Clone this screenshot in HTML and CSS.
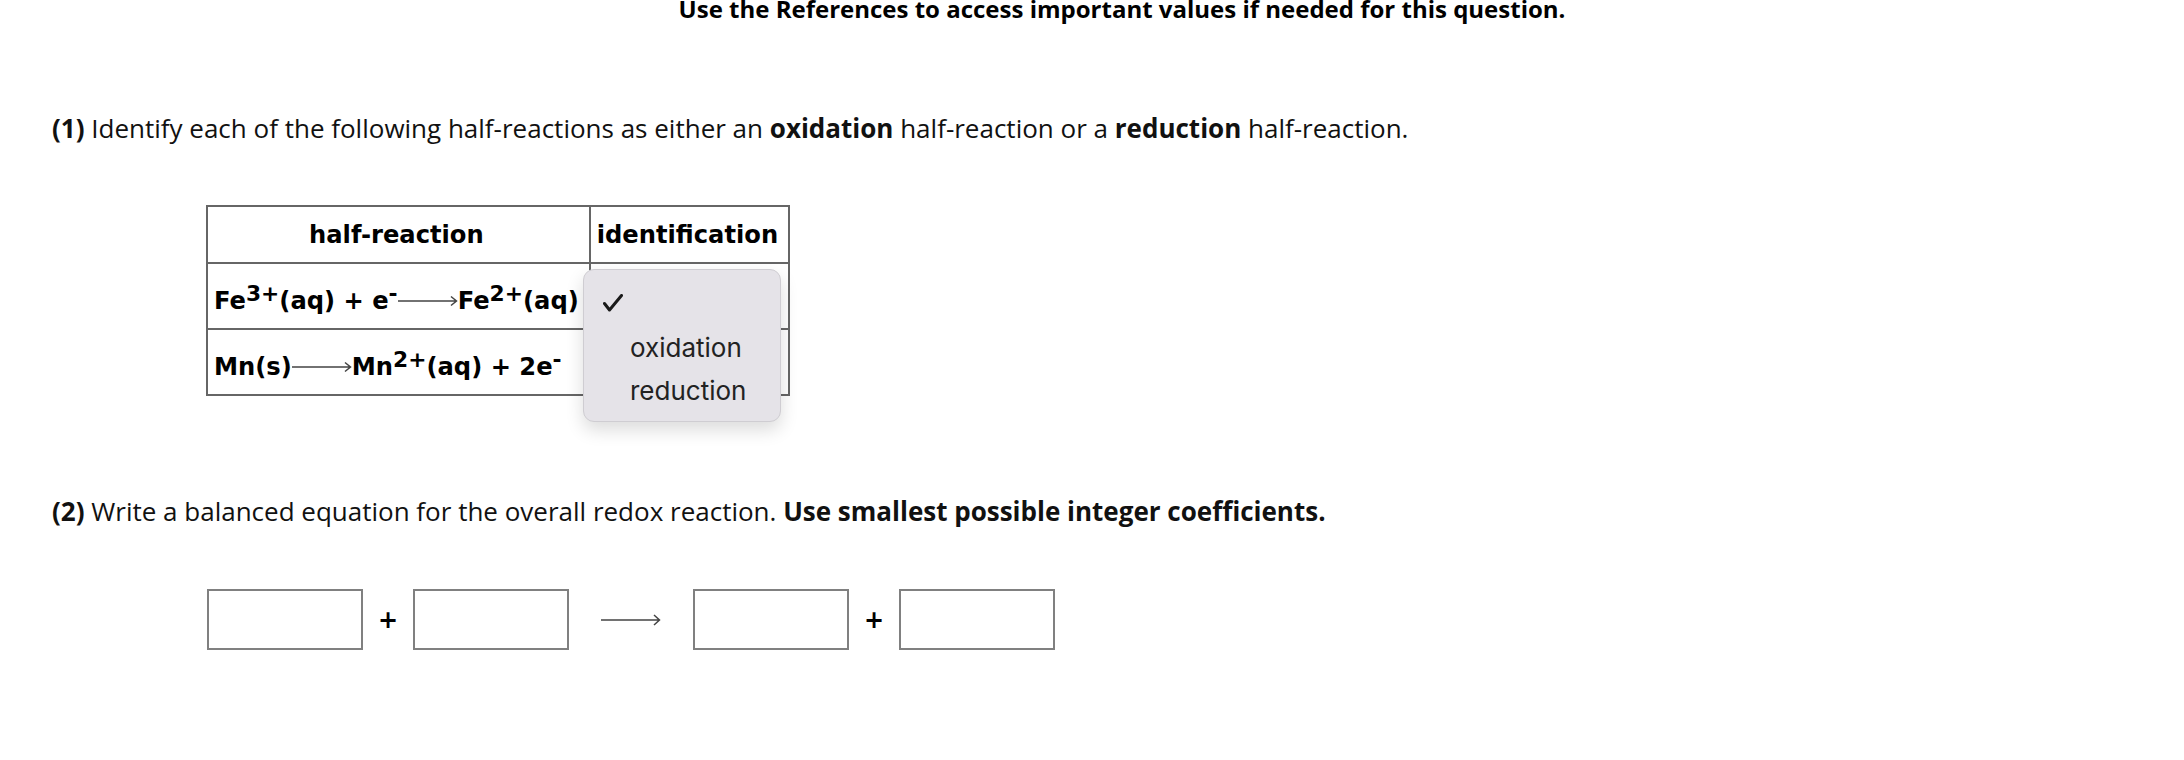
FILE: index.html
```html
<!DOCTYPE html>
<html>
<head lang="en">
    <meta charset="UTF-8">
    <title>Redox half-reactions</title>
<link rel="stylesheet" href="styles.css">
</head>
<body>
  <h1 class="refs">Use the References to access important values if needed for this question.</h1>

  <div class="question">
    <p class="prompt"><b>(1)</b> Identify each of the following half-reactions as either an <b>oxidation</b> half-reaction or a <b>reduction</b> half-reaction.</p>

    <div class="tableWrap">
      <table class="reactions">
        <tr>
          <th class="colReaction">half-reaction</th>
          <th class="colId">identification</th>
        </tr>
        <tr>
          <td>Fe<sup>3+</sup>(aq) + e<sup>-</sup><svg class="arrow" width="60" height="12" viewBox="0 0 60 12"><path d="M0 6H58M53 1.5L58.5 6L53 10.5" /></svg>Fe<sup>2+</sup>(aq)</td>
          <td></td>
        </tr>
        <tr>
          <td>Mn(s)<svg class="arrow" width="60" height="12" viewBox="0 0 60 12"><path d="M0 6H58M53 1.5L58.5 6L53 10.5" /></svg>Mn<sup>2+</sup>(aq) + 2e<sup>-</sup></td>
          <td></td>
        </tr>
      </table>

      <div class="selectMenu">
        <div class="option"><svg class="check" width="20" height="18" viewBox="0 0 20 18"><path d="M1.5 9.5L6.5 16L18.5 1.5" /></svg></div>
        <div class="option">oxidation</div>
        <div class="option">reduction</div>
      </div>
    </div>

    <p class="prompt second"><b>(2)</b> Write a balanced equation for the overall redox reaction. <b>Use smallest possible integer coefficients.</b></p>

    <div class="equation">
      <span class="slot"></span>
      <span class="plus">+</span>
      <span class="slot"></span>
      <svg class="eqArrow" width="60" height="14" viewBox="0 0 60 14"><path d="M0 7H58M53 2L58.5 7L53 12" /></svg>
      <span class="slot"></span>
      <span class="plus">+</span>
      <span class="slot"></span>
    </div>
  </div>
</body>
</html>
```

FILE: styles.css
```css
body, html {
    border: 0;
    padding: 0;
    margin: 0;
    overflow: hidden;
    background: white;
}

body {
  color: #111;
  font-family: "Open Sans", "Noto Sans", sans-serif;
}

.refs{
  margin: -3px 0 0 0;
  padding-left: 60px;
  text-align: center;
  font-size: 24px;
  line-height: 24px;
  font-weight: 700;
  color: #000;
}

.question{
  padding-left: 52px;
}

.prompt{
  margin: 90px 0 0 0;
  font-size: 26px;
  line-height: 34px;
  white-space: nowrap;
}

.prompt b{
  font-weight: 700;
}

.prompt.second{
  margin-top: 98px;
}

.tableWrap{
  position: relative;
  width: max-content;
  margin: 60px 0 0 154px;
}

.reactions{
  border-collapse: collapse;
  font-family: "DejaVu Sans", Verdana, sans-serif;
  font-weight: 700;
  font-size: 24.2px;
  color: #000;
}

.reactions th,
.reactions td{
  border: 2px solid #666;
  padding: 0 10px 0 6px;
  white-space: nowrap;
  vertical-align: middle;
}

.reactions th{
  height: 55px;
  text-align: center;
}

.reactions td{
  height: 54px;
  padding-top: 10px;
  text-align: left;
}

.reactions sup{
  font-size: 0.9em;
  line-height: 0;
  vertical-align: 0.36em;
}

.arrow{
  vertical-align: 2px;
}

.arrow path,
.eqArrow path{
  fill: none;
  stroke: #444;
  stroke-width: 1.5;
}

.selectMenu{
  position: absolute;
  left: 377px;
  top: 64px;
  width: 198px;
  padding: 13px 0 11px 0;
  box-sizing: border-box;
  height: 153px;
  background: #e5e3e8;
  border: 1px solid #cfcdd2;
  border-radius: 11px;
  box-shadow: 0 8px 18px rgba(0,0,0,0.14);
  font-family: Inter, "Liberation Sans", sans-serif;
  font-size: 26px;
  color: #222;
}

.option{
  height: 43px;
  line-height: 43px;
  padding-left: 46px;
  position: relative;
}

.check{
  position: absolute;
  left: 19px;
  top: 11px;
}

.check path{
  fill: none;
  stroke: #1a1a1a;
  stroke-width: 3;
  stroke-linecap: round;
  stroke-linejoin: round;
}

.equation{
  display: flex;
  align-items: center;
  gap: 15px;
  margin: 61px 0 0 155px;
}

.slot{
  width: 156px;
  height: 61px;
  box-sizing: border-box;
  border: 2px solid #808080;
  background: white;
}

.plus{
  font-family: "DejaVu Sans", Verdana, sans-serif;
  font-weight: 700;
  font-size: 24px;
  color: #000;
}

.eqArrow{
  margin: 0 17px;
}
```
